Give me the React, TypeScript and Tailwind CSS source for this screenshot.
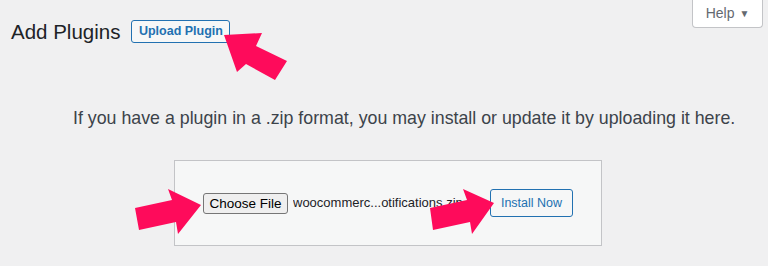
function Arrows() {
  // pink annotation arrows drawn over the screenshot
  return (
    <svg
      className="pointer-events-none absolute left-0 top-0"
      width="768"
      height="266"
      viewBox="0 0 768 266"
    >
      <polygon
        fill="#fe0b5b"
        points="224,35 262,33 256,46 287,61 275,80 246,64 237,72"
      />
      <polygon
        fill="#fe0b5b"
        points="201,205 168,189 172,200 135,208 139,230 176,222 178,234"
      />
      <polygon
        fill="#fe0b5b"
        points="494,203 463,189 467,200 430,208 433,230 470,222 472,234"
      />
    </svg>
  );
}

export default function App() {
  return (
    <div className="relative h-[266px] w-[768px] overflow-hidden bg-[#f0f0f1] font-['Liberation_Sans',Arial,sans-serif]">
      <div className="flex items-start justify-between pl-[11px] pr-[5px]">
        <div className="flex items-center gap-[11px] pt-[20px]">
          <h1 className="text-[20.5px] leading-[23px] text-[#1d2327]">Add Plugins</h1>
          <button className="h-[23px] w-[99px] rounded-[3px] border border-[#2271b1] bg-[#f6f7f7] text-[12.5px] font-bold leading-[21px] text-[#2271b1]">
            Upload Plugin
          </button>
        </div>
        <button className="flex h-[28px] w-[71px] items-center justify-center gap-[5px] rounded-b-[4px] border border-t-0 border-[#c3c4c7] bg-white text-[14px] text-[#646970]">
          Help
          <span className="text-[10px]">▼</span>
        </button>
      </div>

      <p className="mt-[63px] pl-[73px] text-[17.8px] leading-[24px] text-[#3c434a]">
        If you have a plugin in a .zip format, you may install or update it by uploading it here.
      </p>

      <div className="ml-[174px] mt-[30px] flex h-[86px] w-[428px] items-center border border-[#c3c4c7] bg-[#f6f7f7] pl-[28px]">
        <button className="h-[21px] w-[85px] rounded-[3px] border border-[#767676] bg-[#efefef] text-[13.5px] leading-[19px] text-black">
          Choose File
        </button>
        <span className="ml-[5px] w-[189px] overflow-hidden whitespace-nowrap text-[13px] text-[#1d2327]">
          woocommerc...otifications.zip
        </span>
        <button className="ml-[8px] h-[28px] w-[83px] rounded-[3px] border border-[#2271b1] bg-[#f6f7f7] text-[12.5px] text-[#2271b1]">
          Install Now
        </button>
      </div>

      <Arrows />
    </div>
  );
}
